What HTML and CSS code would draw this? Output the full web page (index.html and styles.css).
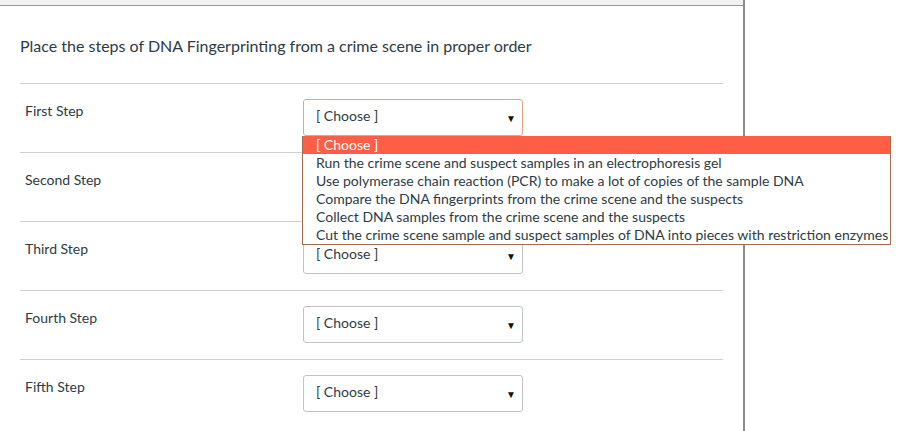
FILE: index.html
```html
<!DOCTYPE html>
<html>
<head>
<meta charset="utf-8">
<link rel="stylesheet" href="styles.css">
</head>
<body>
<div class="page">
  <div class="topband"></div>
  <div class="question">
    <div class="title">Place the steps of DNA Fingerprinting from a crime scene in proper order</div>
    <div class="row">
      <div class="label">First Step</div>
      <div class="field">
        <div class="select focused"><span>[ Choose ]</span><span class="arrow">▼</span></div>
        <ul class="menu">
          <li class="hl">[ Choose ]</li>
          <li>Run the crime scene and suspect samples in an electrophoresis gel</li>
          <li>Use polymerase chain reaction (PCR) to make a lot of copies of the sample DNA</li>
          <li>Compare the DNA fingerprints from the crime scene and the suspects</li>
          <li>Collect DNA samples from the crime scene and the suspects</li>
          <li>Cut the crime scene sample and suspect samples of DNA into pieces with restriction enzymes</li>
        </ul>
      </div>
    </div>
    <div class="row">
      <div class="label">Second Step</div>
      <div class="field"><div class="select"><span>[ Choose ]</span><span class="arrow">▼</span></div></div>
    </div>
    <div class="row">
      <div class="label">Third Step</div>
      <div class="field"><div class="select"><span>[ Choose ]</span><span class="arrow">▼</span></div></div>
    </div>
    <div class="row">
      <div class="label">Fourth Step</div>
      <div class="field"><div class="select"><span>[ Choose ]</span><span class="arrow">▼</span></div></div>
    </div>
    <div class="row">
      <div class="label">Fifth Step</div>
      <div class="field"><div class="select"><span>[ Choose ]</span><span class="arrow">▼</span></div></div>
    </div>
  </div>
</div>
</body>
</html>
```
FILE: styles.css
```css
html, body {
  margin: 0;
  padding: 0;
  background: #fff;
}
body {
  font-family: Lato, "Open Sans", sans-serif;
  color: #2d3b45;
}
.page {
  width: 743px;
  height: 431px;
  border-right: 2px solid #8c8c8c;
  box-sizing: content-box;
}
.topband {
  height: 5px;
  background: #f2f2f2;
  border-bottom: 1px solid #999;
}
.question {
  padding: 0 20px 0 20px;
}
.title {
  font-size: 16px;
  line-height: 20px;
  padding: 30px 0 27px 0;
}
.row {
  display: flex;
  border-top: 1px solid #d0d0d0;
  padding: 15px 0 16px 0;
}
.label {
  width: 278px;
  padding-left: 5px;
  padding-top: 2px;
  font-size: 14px;
  line-height: 20px;
}
.field {
  position: relative;
}
.select {
  box-sizing: border-box;
  width: 220px;
  height: 37px;
  border: 1px solid #c0c4c7;
  border-radius: 3px;
  display: flex;
  align-items: center;
  justify-content: space-between;
  padding: 0 6px 3px 12px;
  font-size: 14px;
  line-height: 18px;
  background: #fff;
}
.select.focused {
  border-color: #eba47f;
}
.arrow {
  font-size: 10px;
  color: #111;
  padding-top: 4px;
}
.menu {
  position: absolute;
  left: -1px;
  top: 37px;
  margin: 0;
  padding: 0;
  list-style: none;
  border: 1px solid #a66b4e;
  border-top: none;
  background: #fff;
  font-size: 14px;
  line-height: 18px;
  white-space: nowrap;
  z-index: 5;
}
.menu li {
  padding: 0 2px 0 13px;
}
.menu li.hl {
  background: #ff5e46;
  color: #fff;
}
```
